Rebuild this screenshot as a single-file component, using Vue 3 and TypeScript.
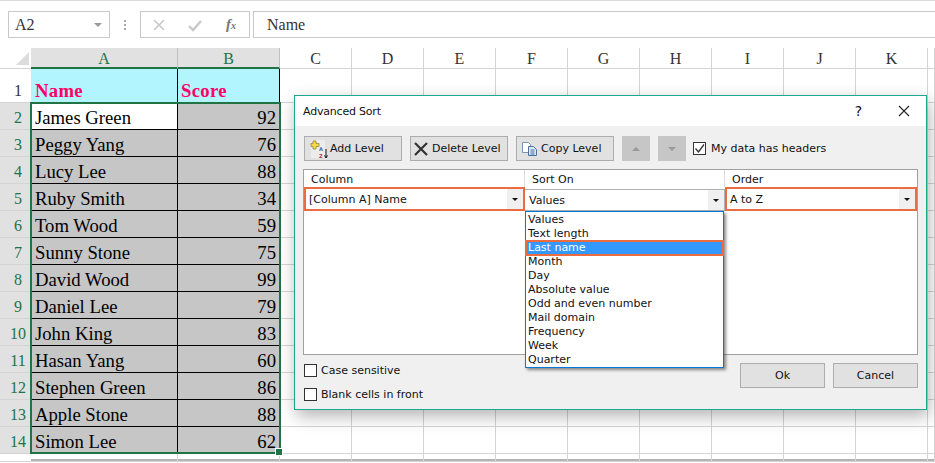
<script setup lang="ts">
const rows: [string, number][] = [
  ['James Green', 92],
  ['Peggy Yang', 76],
  ['Lucy Lee', 88],
  ['Ruby Smith', 34],
  ['Tom Wood', 59],
  ['Sunny Stone', 75],
  ['David Wood', 99],
  ['Daniel Lee', 79],
  ['John King', 83],
  ['Hasan Yang', 60],
  ['Stephen Green', 86],
  ['Apple Stone', 88],
  ['Simon Lee', 62],
]

const emptyCols = ['C', 'D', 'E', 'F', 'G', 'H', 'I', 'J', 'K', '']
const sortOptions = [
  'Values',
  'Text length',
  'Last name',
  'Month',
  'Day',
  'Absolute value',
  'Odd and even number',
  'Mail domain',
  'Frequency',
  'Week',
  'Quarter',
]
</script>

<template>
  <div class="page">
    <div class="formula-bar">
      <div class="name-box">
        <span>A2</span>
        <i class="caret gray"></i>
      </div>
      <div class="dots"><b></b><b></b><b></b></div>
      <div class="fx-box">
        <svg width="14" height="14" viewBox="0 0 14 14"><path d="M2 2l10 10M12 2L2 12" stroke="#c8c8c8" stroke-width="1.600" fill="none" /></svg>
        <svg width="16" height="14" viewBox="0 0 16 14"><path d="M2 8l4 4 8-9" stroke="#c8c8c8" stroke-width="2.400" fill="none" /></svg>
        <span class="fx">f<small>x</small></span>
      </div>
      <div class="formula-input">Name</div>
    </div>

    <div class="sheet">
      <div class="grid">
        <div class="corner"><i></i></div>
        <div class="col-head on">A</div>
        <div class="col-head on">B</div>
        <div v-for="c in emptyCols" :key="'h' + c" class="col-head">{{ c }}</div>

        <div class="row-head">1</div>
        <div class="cell title">Name</div>
        <div class="cell title last">Score</div>
        <div v-for="c in emptyCols" :key="'r1' + c" class="cell blank"></div>

        <template v-for="(r, i) in rows" :key="r[0]">
          <div class="row-head on">{{ i + 2 }}</div>
          <div class="cell data" :class="{ active: i === 0 }">{{ r[0] }}</div>
          <div class="cell data num last">{{ r[1] }}</div>
          <div v-for="c in emptyCols" :key="r[0] + c" class="cell blank"></div>
        </template>

        <div class="row-head stub"></div>
        <div class="cell blank stub"></div>
        <div class="cell blank stub"></div>
        <div v-for="c in emptyCols" :key="'r15' + c" class="cell blank stub"></div>
      </div>
      <div class="selection"><i class="handle"></i></div>
    </div>

    <div class="dialog">
      <div class="dialog-title">
        <span>Advanced Sort</span>
        <div class="title-icons">
          <span class="help">?</span>
          <svg width="12" height="12" viewBox="0 0 12 12"><path d="M1 1l10 10M11 1L1 11" stroke="#222" stroke-width="1.100" fill="none" /></svg>
        </div>
      </div>

      <div class="dialog-body">
        <div class="toolbar">
          <button class="btn tool add">
            <svg width="19" height="20" viewBox="0 0 19 20">
              <rect x="1" y="1" width="14" height="18" fill="#ececec" />
              <path d="M3 2h3v2.500h3v3H6V10H3V7.500H1v-3h2z" fill="#f2d94e" stroke="#9a8630" stroke-width="0.800" />
              <text x="9" y="12" class="az blue">A</text>
              <text x="9" y="19" class="az red">Z</text>
              <path d="M16 10v8.500M14.500 16.500l1.500 2.500 1.500-2.500" stroke="#111" fill="none" />
            </svg>
            Add Level
          </button>
          <button class="btn tool del">
            <svg width="16" height="16" viewBox="0 0 16 16"><path d="M2 2l12 12M14 2L2 14" stroke="#333" stroke-width="2.200" fill="none" /></svg>
            Delete Level
          </button>
          <button class="btn tool copy">
            <svg width="18" height="16" viewBox="0 0 18 16">
              <path d="M1.500 1.500h6l2 2v8h-8z" fill="#fff" stroke="#7d93b5" />
              <path d="M7.500 5.500h5l3 3v6h-8z" fill="#dbe6f5" stroke="#4a6fa5" />
              <path d="M9.500 9h4M9.500 11h4M9.500 13h4" stroke="#4a6fa5" />
            </svg>
            Copy Level
          </button>
          <button class="btn arrow"><i class="caret up"></i></button>
          <button class="btn arrow"><i class="caret gray"></i></button>
          <label class="check headers">
            <span class="box">
              <svg width="11" height="11" viewBox="0 0 11 11"><path d="M1.500 5.500l3 3.500 5.500-7.500" stroke="#333" stroke-width="1.300" fill="none" /></svg>
            </span>
            My data has headers
          </label>
        </div>

        <div class="table">
          <div class="table-head">
            <span class="th first">Column</span>
            <span class="th second">Sort On</span>
            <span class="th third">Order</span>
          </div>
          <div class="table-row">
            <div class="combo first marked">
              <span>[Column A] Name</span>
              <em><i class="caret dark"></i></em>
            </div>
            <div class="combo second">
              <span>Values</span>
              <em><i class="caret dark"></i></em>
              <ul class="dropdown">
                <li v-for="o in sortOptions" :key="o" :class="{ picked: o === 'Last name' }">{{ o }}</li>
              </ul>
            </div>
            <div class="combo third marked">
              <span>A to Z</span>
              <em><i class="caret dark"></i></em>
            </div>
          </div>
        </div>

        <div class="footer">
          <div class="checks">
            <label class="check"><span class="box"></span>Case sensitive</label>
            <label class="check"><span class="box"></span>Blank cells in front</label>
          </div>
          <div class="actions">
            <button class="btn action">Ok</button>
            <button class="btn action">Cancel</button>
          </div>
        </div>
      </div>
    </div>
  </div>
</template>

<style>
html,
body {
  margin: 0;
  background: #fff;
}
</style>

<style scoped>
.page {
  position: relative;
  width: 935px;
  height: 463px;
  overflow: hidden;
  background: #fff;
  border-top: 1px solid #d9d9d9;
  box-sizing: border-box;
  font-family: "Liberation Serif", serif;
  color: #000;
}

.formula-bar {
  display: flex;
  align-items: center;
  height: 47px;
  padding: 10px 0 10px 8px;
  box-sizing: border-box;
  font-size: 16px;
  color: #333;
}

.name-box {
  width: 102px;
  height: 27px;
  border: 1px solid #c8c8c8;
  box-sizing: border-box;
  display: flex;
  align-items: center;
  justify-content: space-between;
  padding: 0 7px 0 6px;
}

.dots {
  width: 30px;
  display: flex;
  flex-direction: column;
  align-items: center;
  gap: 2px;
}

.dots b {
  width: 2px;
  height: 2px;
  background: #a8a8a8;
}

.fx-box {
  width: 110px;
  height: 27px;
  border: 1px solid #c8c8c8;
  box-sizing: border-box;
  display: flex;
  align-items: center;
  gap: 21px;
  padding-left: 11px;
}

.fx {
  font-style: italic;
  font-weight: bold;
  font-size: 15px;
  color: #777;
  margin-left: 2px;
}

.fx small {
  font-size: 10px;
}

.formula-input {
  flex: 1;
  height: 27px;
  margin-left: 3px;
  border: 1px solid #c8c8c8;
  border-right: 0;
  box-sizing: border-box;
  padding: 3px 0 0 13px;
  line-height: 20px;
}

.sheet {
  position: relative;
  height: 413px;
  border-bottom: 2px solid #b4b4b4;
  box-sizing: border-box;
}

.grid {
  display: grid;
  grid-template-columns: 31px 147px 102px repeat(9, 72px) 7px;
  grid-template-rows: 21px 34px repeat(13, 27px) 8px;
}

.corner {
  background: #fff;
  border-bottom: 1px solid #d4d4d4;
  position: relative;
}

.corner i {
  position: absolute;
  left: 16px;
  top: 4px;
  width: 13px;
  height: 13px;
  background: #dcdcdc;
  clip-path: polygon(100% 0, 100% 100%, 0 100%);
}

.col-head {
  font-size: 16px;
  text-align: center;
  line-height: 21px;
  color: #333;
  border-right: 1px solid #d4d4d4;
  border-bottom: 1px solid #d4d4d4;
  box-sizing: border-box;
}

.col-head.on {
  background: #e1e1e1;
  color: #217346;
  border-right-color: #c0c0c0;
  border-bottom: 2px solid #217346;
}

.row-head {
  font-size: 16px;
  text-align: center;
  color: #333;
  padding: 1px 0 0 5px;
  line-height: 27px;
  border-bottom: 1px solid #d4d4d4;
  box-sizing: border-box;
  overflow: hidden;
}

.row-head:not(.on) {
  padding-top: 8px;
}

.row-head.on {
  background: #e1e1e1;
  color: #217346;
}

.row-head.stub {
  background: #fff;
  padding: 0;
}

.cell {
  box-sizing: border-box;
  white-space: nowrap;
  overflow: hidden;
}

.blank {
  border-right: 1px solid #d4d4d4;
  border-bottom: 1px solid #d4d4d4;
}

.title {
  background: #b2f5ff;
  color: #ff0066;
  font-weight: bold;
  font-size: 18.700px;
  letter-spacing: 0.300px;
  padding: 11px 0 0 4px;
  line-height: 22px;
  border-right: 1px solid #000;
}

.title.last {
  padding-left: 3px;
}

.data {
  background: #c6c6c6;
  font-size: 18.700px;
  line-height: 27px;
  padding: 1px 0 0 4px;
  border-right: 1px solid #000;
  border-bottom: 1px solid #000;
}

.data.active {
  background: #fff;
}

.num {
  text-align: right;
  padding: 1px 3px 0 0;
}

.selection {
  position: absolute;
  left: 30px;
  top: 54px;
  width: 251px;
  height: 352px;
  border: 2px solid #217346;
  box-sizing: border-box;
  pointer-events: none;
}

.handle {
  position: absolute;
  right: -4px;
  bottom: -4px;
  width: 6px;
  height: 6px;
  background: #217346;
  border: 1px solid #fff;
}

.caret {
  display: inline-block;
  width: 0;
  height: 0;
  border-left: 4px solid transparent;
  border-right: 4px solid transparent;
  border-top: 4px solid #999;
}

.caret.up {
  border-top: 0;
  border-bottom: 4px solid #999;
}

.caret.dark {
  border-left-width: 3px;
  border-right-width: 3px;
  border-top: 3px solid #111;
}

.dialog {
  position: absolute;
  left: 294px;
  top: 94px;
  width: 633px;
  height: 315px;
  border: 1px solid #1aa88e;
  box-sizing: border-box;
  background: #f0f0f0;
  box-shadow: 2px 6px 16px rgba(0, 0, 0, 0.3);
  font-family: "DejaVu Sans", sans-serif;
  font-size: 11px;
  color: #111;
  display: flex;
  flex-direction: column;
}

.dialog-title {
  height: 30px;
  flex: none;
  background: #fff;
  display: flex;
  align-items: center;
  justify-content: space-between;
  padding: 0 16px 0 8px;
  letter-spacing: -0.200px;
}

.title-icons {
  display: flex;
  align-items: center;
  gap: 36px;
}

.help {
  font-size: 14px;
}

.dialog-body {
  flex: 1;
  padding: 10px 8px 0;
  display: flex;
  flex-direction: column;
}

.btn {
  font: inherit;
  color: inherit;
  background: #e1e1e1;
  border: 1px solid #adadad;
  box-sizing: border-box;
  padding: 0;
  display: flex;
  align-items: center;
  justify-content: center;
}

.toolbar {
  display: flex;
  align-items: center;
  height: 25px;
  padding-left: 1px;
  gap: 8px;
}

.tool {
  width: 98px;
  height: 25px;
  white-space: nowrap;
  justify-content: flex-start;
}

.tool.add {
  padding-left: 5px;
  gap: 1px;
}

.tool.del {
  padding-left: 2px;
  gap: 3px;
}

.tool.copy {
  padding-left: 4px;
  gap: 2px;
}

.arrow {
  width: 28px;
  height: 25px;
  background: #c6c6c6;
  border-color: #c6c6c6;
}

.arrow:first-of-type {
  margin-left: 1px;
}

.az {
  font-family: "DejaVu Sans", sans-serif;
  font-size: 5px;
  font-weight: bold;
}

.az.blue {
  fill: #3a6ea5;
}

.az.red {
  fill: #a04040;
}

.check {
  display: flex;
  align-items: center;
  gap: 4px;
  white-space: nowrap;
}

.check.headers {
  margin-left: -1px;
  gap: 5px;
}

.box {
  width: 13px;
  height: 13px;
  border: 1px solid #333;
  background: #fff;
  box-sizing: border-box;
  display: flex;
  align-items: center;
  justify-content: center;
}

.table {
  margin-top: 8px;
  width: 615px;
  height: 186px;
  flex: none;
  background: #fff;
  border: 1px solid #a0a0a0;
  box-sizing: border-box;
}

.table-head {
  display: flex;
  height: 17px;
  line-height: 20px;
}

.th {
  box-sizing: border-box;
  padding-left: 7px;
  border-right: 1px solid #dcdcdc;
}

.first {
  width: 221px;
}

.second {
  width: 200px;
}

.third {
  flex: 1;
  border-right: 0;
}

.table-row {
  display: flex;
  height: 24px;
}

.combo {
  position: relative;
  box-sizing: border-box;
  display: flex;
  align-items: center;
  justify-content: space-between;
  padding-left: 4px;
  border: 1px solid #b0b0b0;
  border-width: 1px 1px 1px 0;
  height: 22px;
  margin-top: 2px;
}

.combo em {
  width: 16px;
  height: 20px;
  background: #f0f0f0;
  display: flex;
  align-items: center;
  justify-content: center;
}

.combo.marked {
  border: 2px solid #ec6b41;
  height: 24px;
  margin-top: 0;
  padding-left: 3px;
}

.dropdown {
  position: absolute;
  left: 0;
  top: 21px;
  width: 199px;
  height: 157px;
  margin: 0;
  padding: 1px 0 0;
  list-style: none;
  background: #fff;
  border: 1px solid #0078d7;
  box-sizing: border-box;
  box-shadow: 2px 2px 3px rgba(0, 0, 0, 0.45);
  z-index: 2;
}

.dropdown li {
  height: 14px;
  line-height: 14px;
  padding-left: 2px;
  box-sizing: border-box;
}

.dropdown li.picked {
  background: #3399ff;
  color: #fff;
  outline: 2px solid #ec6b41;
  outline-offset: -1px;
}

.footer {
  display: flex;
  justify-content: space-between;
  padding-top: 8px;
  width: 615px;
}

.checks {
  display: flex;
  flex-direction: column;
  gap: 11px;
  padding-left: 1px;
  padding-top: 1px;
}

.actions {
  display: flex;
  gap: 8px;
}

.action {
  width: 85px;
  height: 25px;
}
</style>
